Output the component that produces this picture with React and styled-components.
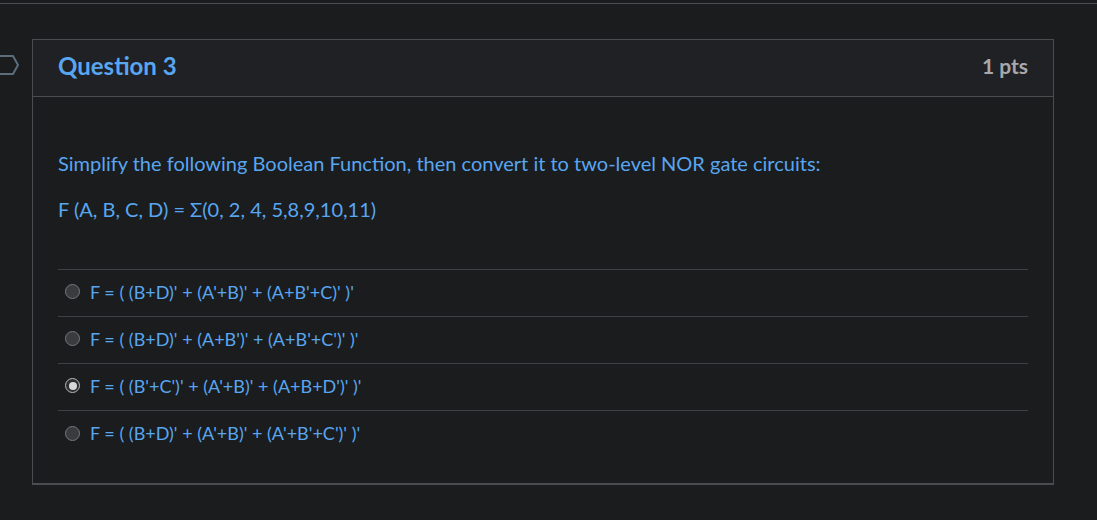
import styled, { createGlobalStyle } from "styled-components";

const GlobalStyle = createGlobalStyle`
  html, body {
    margin: 0;
    padding: 0;
    background: #1b1c1e;
    font-family: Lato, "Open Sans", sans-serif;
  }
`;

const Page = styled.div`
  min-height: 520px;
  padding-top: 3px;
  box-sizing: border-box;
`;

const TopRule = styled.div`
  height: 1px;
  background: #4a4c50;
  margin-bottom: 35px;
`;

const Row = styled.div`
  display: flex;
  align-items: flex-start;
`;

const FlagCol = styled.div`
  width: 35px;
  padding-top: 16px;
  margin-left: -3px;
`;

const Card = styled.div`
  width: 1022px;
  height: 446px;
  box-sizing: border-box;
  border: 1px solid #4a4c50;
  border-bottom-width: 2px;
  display: flex;
  flex-direction: column;
`;

const Header = styled.div`
  height: 57px;
  box-sizing: border-box;
  background: #202124;
  border-bottom: 1px solid #4a4c50;
  display: flex;
  align-items: center;
  justify-content: space-between;
  padding: 0 25px 5px 25px;
`;

const Title = styled.h2`
  margin: 0;
  font-size: 24px;
  font-weight: 700;
  color: #58a6f0;
`;

const Points = styled.span`
  font-size: 21px;
  font-weight: 700;
  color: #a6a8ab;
`;

const Body = styled.div`
  padding: 52px 25px 0 25px;
`;

const Text = styled.p`
  margin: 0 0 ${(p) => p.$gap || 0}px;
  font-size: 20px;
  line-height: 28px;
  color: #58a6f0;
`;

const Answers = styled.div`
  margin-top: 46px;
  border-top: 1px solid #3e4043;
`;

const Answer = styled.label`
  display: flex;
  align-items: center;
  height: 47px;
  box-sizing: border-box;
  border-bottom: 1px solid #3e4043;
  padding: 0 0 3px 7px;
  gap: 10px;
  font-size: 18px;
  color: #58a6f0;

  &:last-child {
    border-bottom: none;
  }
`;

const Radio = styled.span`
  width: 15px;
  height: 15px;
  box-sizing: border-box;
  border-radius: 50%;
  border: 1.5px solid ${(p) => (p.$checked ? "#b8b9bb" : "#75777b")};
  background: ${(p) => (p.$checked ? "#2d2e30" : "#3a3b3e")};
  display: flex;
  align-items: center;
  justify-content: center;

  &::after {
    content: "";
    width: 8px;
    height: 8px;
    border-radius: 50%;
    background: #d6d7d9;
    display: ${(p) => (p.$checked ? "block" : "none")};
  }
`;

const FlagIcon = () => (
  <svg width="22" height="20" viewBox="0 0 22 20">
    <path
      d="M1 1 H16 L21 10 L16 19 H1 Z"
      fill="none"
      stroke="#5c6d7b"
      strokeWidth="2"
      strokeLinejoin="round"
    />
  </svg>
);

const answers = [
  { text: "F = ( (B+D)' + (A'+B)' + (A+B'+C)' )'", checked: false },
  { text: "F = ( (B+D)' + (A+B')' + (A+B'+C')' )'", checked: false },
  { text: "F = ( (B'+C')' + (A'+B)' + (A+B+D')' )'", checked: true },
  { text: "F = ( (B+D)' + (A'+B)' + (A'+B'+C')' )'", checked: false },
];

export default function App() {
  return (
    <Page>
      <GlobalStyle />
      <TopRule />
      <Row>
        <FlagCol>
          <FlagIcon />
        </FlagCol>
        <Card>
          <Header>
            <Title>Question 3</Title>
            <Points>1 pts</Points>
          </Header>
          <Body>
            <Text $gap={18}>
              Simplify the following Boolean Function, then convert it to
              two-level NOR gate circuits:
            </Text>
            <Text>F (A, B, C, D) = Σ(0, 2, 4, 5,8,9,10,11)</Text>
            <Answers>
              {answers.map((a, i) => (
                <Answer key={i}>
                  <Radio $checked={a.checked} />
                  {a.text}
                </Answer>
              ))}
            </Answers>
          </Body>
        </Card>
      </Row>
    </Page>
  );
}
